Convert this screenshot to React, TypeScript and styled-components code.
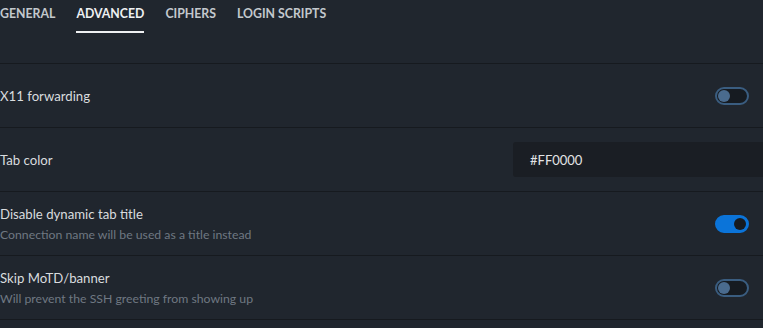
import React from 'react';
import styled, { createGlobalStyle } from 'styled-components';

const GlobalStyle = createGlobalStyle`
  html, body {
    margin: 0;
    padding: 0;
    background: #20262e;
    overflow: hidden;
  }
  body {
    font-family: Lato, "Noto Sans", sans-serif;
  }
`;

const Page = styled.div`
  width: 763px;
  height: 328px;
  background: #20262e;
  color: #d6d9dc;
  overflow: hidden;
`;

const TabBar = styled.div`
  display: flex;
  align-items: flex-start;
  gap: 21px;
  height: 64px;
  border-bottom: 1px solid #161a1f;
  box-sizing: border-box;
`;

const Tab = styled.div<{ active?: boolean }>`
  padding-top: 6px;
  height: 25px;
  font-size: 12.3px;
  font-weight: 700;
  color: ${({ active }) => (active ? '#eef0f2' : '#c3c8cd')};
  border-bottom: 2px solid ${({ active }) => (active ? '#eef0f2' : 'transparent')};
`;

const Row = styled.div`
  display: flex;
  align-items: center;
  justify-content: space-between;
  height: 64px;
  border-bottom: 1px solid #161a1f;
  box-sizing: border-box;
`;

const Labels = styled.div`
  display: flex;
  flex-direction: column;
  gap: 5px;
`;

const Title = styled.div`
  font-size: 13.2px;
  color: #d9dcdf;
`;

const Hint = styled.div`
  font-size: 12.25px;
  color: #6f7882;
`;

const Switch = styled.div<{ on?: boolean }>`
  position: relative;
  width: 34px;
  height: 18px;
  margin-right: 14px;
  box-sizing: border-box;
  border-radius: 9px;
  border: 2px solid ${({ on }) => (on ? '#0b74d9' : '#3a5d80')};
  background: ${({ on }) => (on ? '#0b74d9' : '#161b21')};

  &::after {
    content: '';
    position: absolute;
    top: 1px;
    left: ${({ on }) => (on ? '17px' : '1px')};
    width: 12px;
    height: 12px;
    border-radius: 50%;
    background: ${({ on }) => (on ? '#161b21' : '#4a6b8e')};
  }
`;

const ColorInput = styled.div`
  width: 250px;
  height: 35px;
  box-sizing: border-box;
  padding-left: 17px;
  display: flex;
  align-items: center;
  background: #1a1e24;
  border-radius: 3px 0 0 3px;
  font-size: 13px;
  color: #e2e4e6;
`;

const settings = [
  { title: 'X11 forwarding', hint: '', kind: 'switch', on: false },
  { title: 'Tab color', hint: '', kind: 'input', on: false },
  { title: 'Disable dynamic tab title', hint: 'Connection name will be used as a title instead', kind: 'switch', on: true },
  { title: 'Skip MoTD/banner', hint: 'Will prevent the SSH greeting from showing up', kind: 'switch', on: false },
];

export default function App() {
  return (
    <Page>
      <GlobalStyle />
      <TabBar>
        <Tab>GENERAL</Tab>
        <Tab active>ADVANCED</Tab>
        <Tab>CIPHERS</Tab>
        <Tab>LOGIN SCRIPTS</Tab>
      </TabBar>
      {settings.map((s) => (
        <Row key={s.title}>
          <Labels>
            <Title>{s.title}</Title>
            {s.hint && <Hint>{s.hint}</Hint>}
          </Labels>
          {s.kind === 'switch' ? <Switch on={s.on} /> : <ColorInput>#FF0000</ColorInput>}
        </Row>
      ))}
    </Page>
  );
}
